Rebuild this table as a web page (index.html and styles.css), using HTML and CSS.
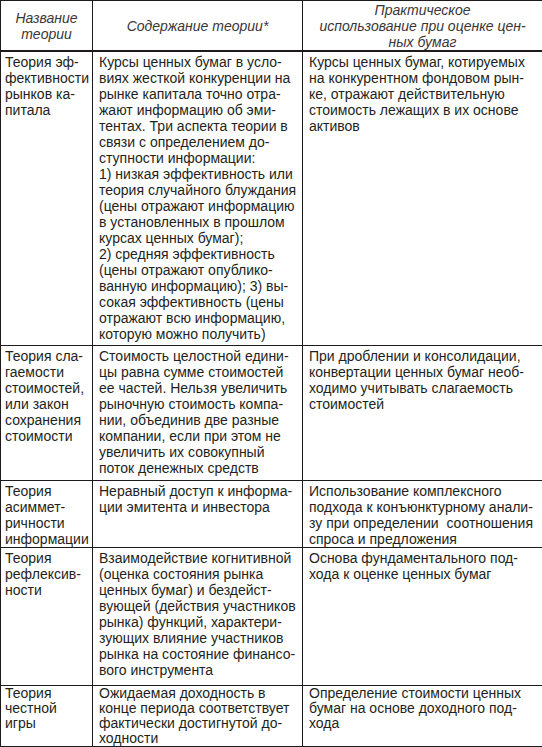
FILE: index.html
```html
<!DOCTYPE html>
<html lang="ru">
<head>
<meta charset="utf-8">
<title>Теории</title>
<link rel="stylesheet" href="styles.css">
</head>
<body>
<table class="tbl">
  <colgroup>
    <col class="c1">
    <col class="c2">
    <col class="c3">
  </colgroup>
  <thead>
    <tr class="rh">
      <th>Название<br>теории</th>
      <th>Содержание теории*</th>
      <th>Практическое<br>использование при оценке цен-<br>ных бумаг</th>
    </tr>
  </thead>
  <tbody>
    <tr class="r1">
      <td class="name">Теория эф-<br>фективности<br>рынков ка-<br>питала</td>
      <td>Курсы ценных бумаг в усло-<br>виях жесткой конкуренции на<br>рынке капитала точно отра-<br>жают информацию об эми-<br>тентах. Три аспекта теории в<br>связи с определением до-<br>ступности информации:<br>1) низкая эффективность или<br>теория случайного блуждания<br>(цены отражают информацию<br>в установленных в прошлом<br>курсах ценных бумаг);<br>2) средняя эффективность<br>(цены отражают опублико-<br>ванную информацию); 3) вы-<br>сокая эффективность (цены<br>отражают всю информацию,<br>которую можно получить)</td>
      <td>Курсы ценных бумаг, котируемых<br>на конкурентном фондовом рын-<br>ке, отражают действительную<br>стоимость лежащих в их основе<br>активов</td>
    </tr>
    <tr class="r2">
      <td class="name">Теория сла-<br>гаемости<br>стоимостей,<br>или закон<br>сохранения<br>стоимости</td>
      <td>Стоимость целостной едини-<br>цы равна сумме стоимостей<br>ее частей. Нельзя увеличить<br>рыночную стоимость компа-<br>нии, объединив две разные<br>компании, если при этом не<br>увеличить их совокупный<br>поток денежных средств</td>
      <td>При дроблении и консолидации,<br>конвертации ценных бумаг необ-<br>ходимо учитывать слагаемость<br>стоимостей</td>
    </tr>
    <tr class="r3">
      <td class="name">Теория<br>асиммет-<br>ричности<br>информации</td>
      <td>Неравный доступ к информа-<br>ции эмитента и инвестора</td>
      <td>Использование комплексного<br>подхода к конъюнктурному анали-<br>зу при определении&nbsp; соотношения<br>спроса и предложения</td>
    </tr>
    <tr class="r4">
      <td class="name">Теория<br>рефлексив-<br>ности</td>
      <td>Взаимодействие когнитивной<br>(оценка состояния рынка<br>ценных бумаг) и бездейст-<br>вующей (действия участников<br>рынка) функций, характери-<br>зующих влияние участников<br>рынка на состояние финансо-<br>вого инструмента</td>
      <td>Основа фундаментального под-<br>хода к оценке ценных бумаг</td>
    </tr>
    <tr class="r5">
      <td class="name">Теория<br>честной<br>игры</td>
      <td>Ожидаемая доходность в<br>конце периода соответствует<br>фактически достигнутой до-<br>ходности</td>
      <td>Определение стоимости ценных<br>бумаг на основе доходного под-<br>хода</td>
    </tr>
  </tbody>
</table>
</body>
</html>
```

FILE: styles.css
```css
html, body {
  margin: 0;
  padding: 0;
  background: #ffffff;
}

.tbl {
  border-collapse: collapse;
  table-layout: fixed;
  width: 542px;
  font-family: "Liberation Sans", Arial, sans-serif;
  font-size: 14px;
  line-height: 16px;
  color: #231f20;
}

.c1 { width: 92px; }
.c2 { width: 210px; }
.c3 { width: 240px; }

.tbl th,
.tbl td {
  border: 1px solid #1e1a1b;
  white-space: nowrap;
  overflow: hidden;
}

.tbl th {
  font-style: italic;
  font-weight: normal;
  color: #3a3637;
  text-align: center;
  vertical-align: middle;
  padding: 0 4px;
  border-bottom: 2px solid #1e1a1b;
}

.tbl td {
  text-align: left;
  vertical-align: top;
  padding: 2px 4px 0 6px;
}

.tbl td.name {
  padding-left: 4px;
}

.rh th { height: 49px; }
.r1 td { height: 291px; }
.r2 td { height: 132px; }
.r3 td { height: 60px; }
.r4 td { height: 135px; }
.r5 td {
  height: 58px;
  padding-top: 0;
  line-height: 15px;
}
```
